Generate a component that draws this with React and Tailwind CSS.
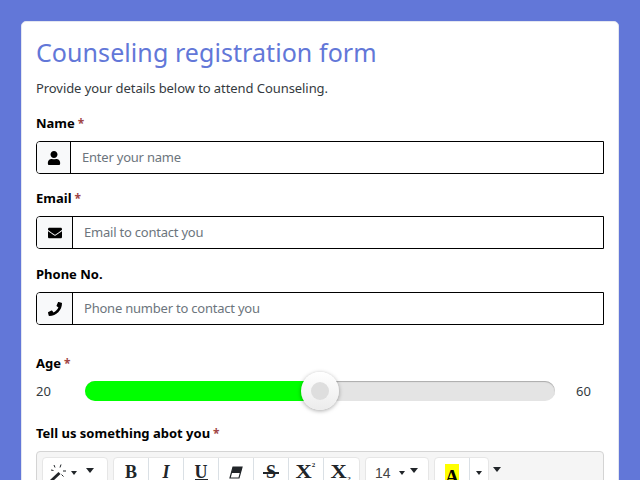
import { FaUser, FaEnvelope, FaPhone } from "react-icons/fa";

function Req() {
  return <span className="text-[#a04545] text-[12px] font-bold ml-[3px]">*</span>;
}

function Field({ label, required, icon, addon, placeholder, mb }) {
  return (
    <div className={mb}>
      <label className="block h-[20px] text-[13px] leading-[20px] font-bold text-black mb-[8px]">
        {label}
        {required && <Req />}
      </label>
      <div className="flex h-[33px] border border-black rounded-l-[4px] overflow-hidden">
        <div className={`flex items-center justify-center border-r border-black bg-[#f8f9fa] text-black text-[14px] ${addon}`}>
          {icon}
        </div>
        <div className="flex-1 pl-[11px] text-[13px] leading-[30px] tracking-[-0.22px] text-[#6c757d]">{placeholder}</div>
      </div>
    </div>
  );
}

function Btn({ children, last }) {
  return (
    <div className={`flex items-start justify-center w-[35px] h-[32px] ${last ? "" : "border-r border-[#dae0e5]"}`}>
      {children}
    </div>
  );
}

function CaretSmall({ className }) {
  return <span className={`w-0 h-0 shrink-0 border-x-[3.5px] border-x-transparent border-t-[4px] border-t-[#212529] ${className}`} />;
}

function CaretLarge({ className }) {
  return <span className={`w-0 h-0 shrink-0 border-x-[4px] border-x-transparent border-t-[5px] border-t-[#212529] ${className}`} />;
}

const serif = "font-['Liberation_Serif',serif] font-bold text-[#212529] text-[18px] leading-[29px]";

export default function App() {
  return (
    <div className="h-screen overflow-hidden bg-[#6277d8] px-[21px] pt-[21px] font-['Noto_Sans',sans-serif]">
      <div className="bg-white rounded-t-[5px] border border-[#e3e6f0] h-[470px] px-[14px] pt-[13px]">
        <h1 className="text-[25px] leading-[35px] tracking-[0.07px] text-[#6277d8] mb-[8px]">Counseling registration form</h1>
        <p className="text-[13px] leading-[20px] tracking-[-0.07px] text-[#343a40] mb-[15px]">Provide your details below to attend Counseling.</p>

        <Field label="Name" required icon={<FaUser />} addon="w-[34px]" placeholder="Enter your name" mb="mb-[14px]" />
        <Field label="Email" required icon={<FaEnvelope />} addon="w-[36px]" placeholder="Email to contact you" mb="mb-[15px]" />
        <Field label="Phone No." icon={<FaPhone />} addon="w-[36px]" placeholder="Phone number to contact you" mb="mb-[28px]" />

        <label className="block h-[20px] text-[13px] leading-[20px] font-bold text-black">
          Age
          <Req />
        </label>
        <div className="flex items-center h-[36px] mb-[14px]">
          <span className="w-[49px] text-[13px] leading-[38px] text-[#343a40]">20</span>
          <div className="relative w-[470px] h-[20px] rounded-full bg-[#e4e4e4] shadow-[inset_0_1px_1px_#aaa]">
            <div className="h-full w-[235px] rounded-full bg-[#00ff00]" />
            <div className="absolute left-[216px] top-[-9px] w-[38px] h-[38px] rounded-full bg-gradient-to-b from-[#ffffff] to-[#ececec] shadow-[0_1px_4px_rgba(0,0,0,0.35)] flex items-center justify-center">
              <div className="w-[18px] h-[18px] rounded-full bg-[#dedede]" />
            </div>
          </div>
          <span className="ml-[21px] text-[13px] leading-[38px] text-[#343a40]">60</span>
        </div>

        <label className="block h-[20px] text-[13px] leading-[20px] font-bold text-black mb-[8px]">
          Tell us something abot you
          <Req />
        </label>
        <div className="flex items-start gap-[5px] h-[60px] bg-[#f5f5f5] border border-[#d4d4d4] rounded-t-[4px] pl-[5px] pt-[5px] text-[#212529]">
          <div className="flex items-start w-[66px] h-[32px] pl-[6px] pt-[6px] bg-white border border-[#e6e6e6] rounded-[4px]">
            <svg width="18" height="18" viewBox="0 0 18 18" className="shrink-0">
              <path d="M0.5 16.5 L9.5 8 L11.5 10 L3 18 Z" fill="#212529" />
              <path d="M5 1 L6 3.5 M12 0.5 L11 3.5 M14 7 L17 7 M2 6 L4.5 6.5 M12.5 10.5 L14.5 12.5" stroke="#212529" strokeWidth="1" />
            </svg>
            <CaretSmall className="mt-[7px] ml-[4px]" />
            <CaretLarge className="mt-[4px] ml-[9px]" />
          </div>
          <div className="flex bg-white border border-[#e6e6e6] rounded-[4px]">
            <Btn><span className={serif}>B</span></Btn>
            <Btn><span className={`${serif} italic`}>I</span></Btn>
            <Btn>
              <span className={`${serif} relative`}>
                U
                <span className="absolute left-0 right-0 top-[21px] h-[2px] bg-[#212529]" />
              </span>
            </Btn>
            <Btn>
              <svg width="14" height="13" viewBox="0 0 14 13" className="mt-[8px]">
                <path d="M4 1 H13 L10 12 H1 Z" fill="#fff" stroke="#212529" strokeWidth="1.2" />
                <path d="M4 1 H13 L11.5 7 H2.5 Z" fill="#212529" />
              </svg>
            </Btn>
            <Btn>
              <span className={`${serif} relative`}>
                S
                <span className="absolute left-[-3px] right-[-3px] top-[14px] h-[2px] bg-[#212529]" />
              </span>
            </Btn>
            <Btn>
              <span className={serif}>
                <span className="inline-block scale-x-125">X</span>
                <sup className="text-[7px] align-[8px] ml-[2px]">2</sup>
              </span>
            </Btn>
            <Btn last>
              <span className={serif}>
                <span className="inline-block scale-x-125">X</span>
                <sub className="text-[7px] align-[-1px] ml-[2px]">2</sub>
              </span>
            </Btn>
          </div>
          <div className="flex items-start w-[64px] h-[32px] pl-[9px] pt-[5px] bg-white border border-[#e6e6e6] rounded-[4px] font-['Liberation_Sans',sans-serif] text-[14px] text-[#444]">
            14
            <CaretSmall className="mt-[8px] ml-[8px]" />
            <CaretLarge className="mt-[5px] ml-[5px]" />
          </div>
          <div className="flex h-[32px] bg-white border border-[#e6e6e6] rounded-[4px]">
            <div className="flex items-start justify-center w-[35px] pt-[6px] border-r border-[#dae0e5]">
              <span className="font-['Liberation_Serif',serif] font-bold text-[20px] leading-[26px] text-black bg-[#ffff00]">A</span>
            </div>
            <div className="flex items-start justify-center w-[18px] pt-[13px]">
              <CaretSmall />
            </div>
          </div>
          <CaretLarge className="-ml-[1px] mt-[10px]" />
        </div>
      </div>
    </div>
  );
}
